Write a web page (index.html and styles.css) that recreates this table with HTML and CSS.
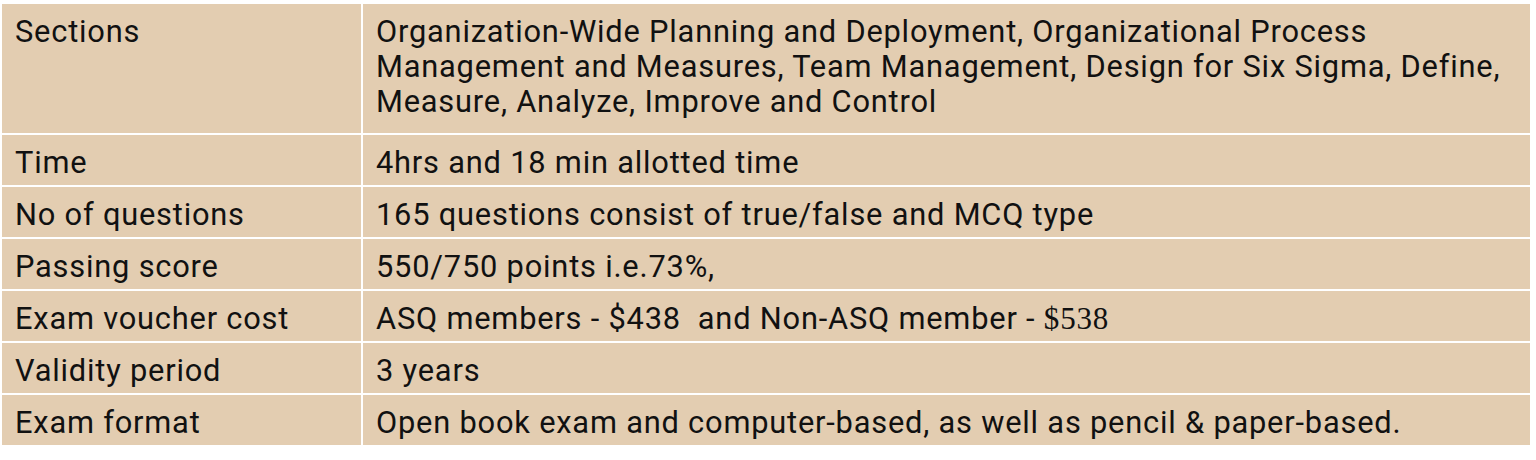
FILE: index.html
```html
<!DOCTYPE html>
<html lang="en">
<head>
<meta charset="utf-8">
<title>Exam details</title>
<link rel="stylesheet" href="styles.css">
</head>
<body>
<table class="info">
  <tbody>
    <tr class="row-tall">
      <td class="label">Sections</td>
      <td class="value">Organization-Wide Planning and Deployment, Organizational Process Management and Measures, Team Management, Design for Six Sigma, Define, Measure, Analyze, Improve and Control</td>
    </tr>
    <tr>
      <td class="label">Time</td>
      <td class="value">4hrs and 18 min allotted time</td>
    </tr>
    <tr>
      <td class="label">No of questions</td>
      <td class="value">165 questions consist of true/false and MCQ type</td>
    </tr>
    <tr>
      <td class="label">Passing score</td>
      <td class="value">550/750 points i.e.73%,</td>
    </tr>
    <tr>
      <td class="label">Exam voucher cost</td>
      <td class="value">ASQ members - $438 &nbsp;and Non-ASQ member - <span class="serif">$538</span></td>
    </tr>
    <tr>
      <td class="label">Validity period</td>
      <td class="value">3 years</td>
    </tr>
    <tr>
      <td class="label">Exam format</td>
      <td class="value">Open book exam and computer-based, as well as pencil &amp; paper-based.</td>
    </tr>
  </tbody>
</table>
</body>
</html>
```
FILE: styles.css
```css
html, body {
  margin: 0;
  padding: 0;
  background: #ffffff;
}

body {
  padding-top: 2px;
  font-family: Roboto, "Liberation Sans", sans-serif;
  color: #111111;
}

.info {
  border-collapse: separate;
  border-spacing: 2px;
  width: 1532px;
  table-layout: fixed;
}

.info td {
  background: #e3cdb1;
  font-size: 30.8px;
  line-height: 35px;
  letter-spacing: 0.8px;
  padding: 10px 12px 4px 13px;
  vertical-align: top;
  height: 36px;
}

.info .row-tall td {
  height: 115px;
}

.info .label {
  width: 334px;
}

.serif {
  font-family: "Liberation Serif", "Times New Roman", serif;
  font-size: 31px;
}
```
